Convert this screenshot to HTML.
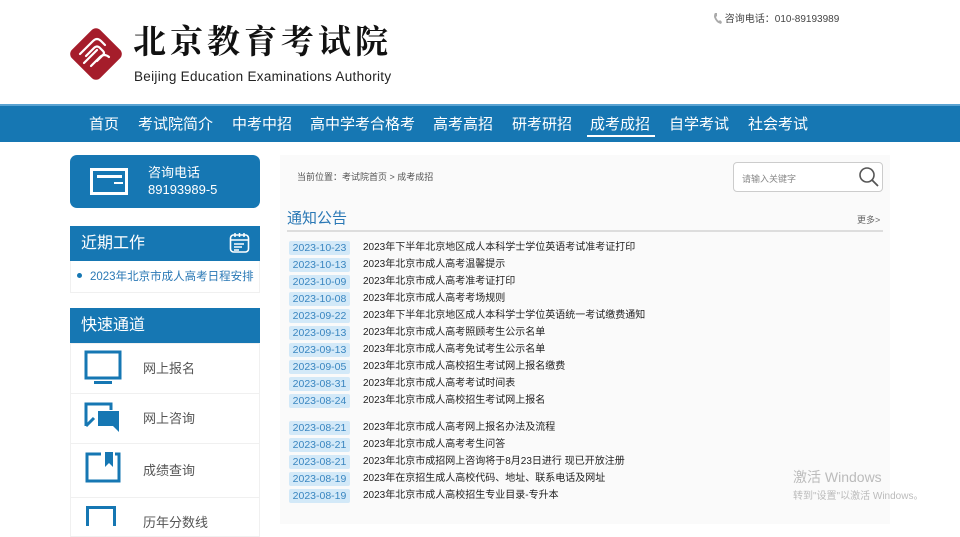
<!DOCTYPE html>
<html><head><meta charset="utf-8"><style>
*{margin:0;padding:0;box-sizing:border-box}
body{width:960px;height:524px;overflow:hidden;background:#fff;font-family:"Liberation Sans","Microsoft YaHei","Noto Sans CJK SC",sans-serif;position:relative}
.abs{position:absolute}
.nav{left:0;top:104px;width:960px;height:38px;background:#1677b3;border-top:2px solid #5aa3d2}
.nav span{position:absolute;top:7px;color:#fff;font-size:15px;white-space:nowrap}
.panel{left:280px;top:155px;width:610px;height:369px;background:#fafafa}
.row{position:absolute;left:289px;height:14px;font-size:10px;white-space:nowrap}
.row b{display:inline-block;width:61px;height:14px;background:#d3e9f8;color:#3a86c0;font-weight:normal;font-size:10.5px;line-height:14px;text-align:center;border-radius:2px;vertical-align:top}
.row i{font-style:normal;color:#222;margin-left:13px;line-height:14px;vertical-align:top}
.hd{left:70px;width:190px;height:35px;background:#1677b3;color:#fff;font-size:16px;line-height:35px;padding-left:11px}
.qi{left:70px;width:190px;border:1px solid #f0f0f0;background:#fff;font-size:13px;color:#555}
.qi span{position:absolute;left:72px}
</style></head><body>
<svg class="abs" style="left:66px;top:24px" width="60" height="60" viewBox="0 0 60 60">
<rect x="10" y="10" width="40" height="40" rx="6" fill="#a51d2b" transform="rotate(45 30 30)"/>
<g fill="none" stroke="#fff" stroke-width="2.2" stroke-linecap="round">
<path d="M14 30 L27 17 Q31 13 35 17 L39 21"/>
<path d="M20 32 L28 24 Q31 21 34 24 L37 27 Q39 29 37 31 L31 37"/>
<path d="M18 39 L31 26"/>
<path d="M25 42 L34 33 Q38 29 43 33"/>
</g></svg>
<div class="abs" style="left:133px;top:18px;font-family:'Noto Serif CJK SC',serif;font-size:33px;letter-spacing:4px;color:#111;font-weight:bold;line-height:44px">北京教育考试院</div>
<div class="abs" style="left:134px;top:69px;font-size:13.5px;color:#222;letter-spacing:0.3px">Beijing Education Examinations Authority</div>
<div class="abs" style="left:713px;top:10px;font-size:10px;color:#444">
<svg width="9" height="12" viewBox="0 0 9 12" style="vertical-align:-2px"><path d="M2 1 L4 1 L4 4 L3 5 Q4 8 6 9 L7 8 L9 10 L8 12 Q3 11 1 5 Q1 2 2 1Z" fill="#aaa"/></svg> 咨询电话：010-89193989</div>
<div class="abs nav">
<span style="left:89px">首页</span><span style="left:138px">考试院简介</span><span style="left:232px">中考中招</span><span style="left:310px">高中学考合格考</span><span style="left:433px">高考高招</span><span style="left:512px">研考研招</span><span style="left:590px">成考成招</span><span style="left:669px">自学考试</span><span style="left:748px">社会考试</span>
<div class="abs" style="left:587px;top:29px;width:68px;height:2px;background:#fff"></div>
</div>
<div class="abs" style="left:70px;top:155px;width:190px;height:53px;background:#1677b3;border-radius:7px"></div>
<div class="abs" style="left:90px;top:168px;width:38px;height:27px;border:3px solid #fff"></div>
<div class="abs" style="left:97px;top:175px;width:25px;height:3px;background:#fff"></div>
<div class="abs" style="left:114px;top:182px;width:9px;height:2px;background:#fff"></div>
<div class="abs" style="left:148px;top:164px;color:#fff;font-size:13px;line-height:17px">咨询电话<br>89193989-5</div>
<div class="abs hd" style="top:226px">近期工作</div>
<svg class="abs" style="left:229px;top:232px" width="21" height="22" viewBox="0 0 21 22"><rect x="1.5" y="3" width="18" height="17" rx="3" fill="none" stroke="#fff" stroke-width="1.6"/><path d="M1.5 8H19.5M6 1V5M10.5 1V5M15 1V5M5 12H15M5 15H13M5 18H10" stroke="#fff" stroke-width="1.5"/></svg>
<div class="abs" style="left:70px;top:261px;width:190px;height:32px;border:1px solid #f0f0f0;border-top:0"></div>
<div class="abs" style="left:77px;top:273px;width:5px;height:5px;border-radius:50%;background:#1677b3"></div>
<div class="abs" style="left:90px;top:268px;font-size:11.5px;color:#2a78b5">2023年北京市成人高考日程安排</div>
<div class="abs hd" style="top:308px">快速通道</div>
<div class="abs qi" style="top:343px;height:51px"><span style="top:14px">网上报名</span></div>
<div class="abs qi" style="top:393px;height:51px"><span style="top:14px">网上咨询</span></div>
<div class="abs qi" style="top:443px;height:55px"><span style="top:16px">成绩查询</span></div>
<div class="abs qi" style="top:497px;height:40px"><span style="top:14px">历年分数线</span></div>
<svg class="abs" style="left:84px;top:350px" width="40" height="140" viewBox="0 0 40 140">
<rect x="2" y="2" width="34" height="26" fill="none" stroke="#1677b3" stroke-width="3"/><rect x="10" y="31" width="18" height="3" fill="#1677b3"/>
<path d="M2 76 V54 H27 V60" fill="none" stroke="#1677b3" stroke-width="3"/><path d="M2 76 L10 68" stroke="#1677b3" stroke-width="3"/><path d="M14 61 H35 V82 L29 76 H14Z" fill="#1677b3"/>
<path d="M17 104 H3 V131 H35 V104 H31" fill="none" stroke="#1677b3" stroke-width="3"/><path d="M21 102 H29 V117 L25 113 L21 117Z" fill="#1677b3"/>
</svg>
<div class="abs" style="left:86px;top:506px;width:30px;height:20px;border:3px solid #1677b3;border-bottom:0"></div>
<div class="abs panel"></div>
<div class="abs" style="left:297px;top:170px;font-size:9px;color:#555">当前位置：考试院首页 &gt; 成考成招</div>
<div class="abs" style="left:733px;top:162px;width:150px;height:30px;border:1px solid #ccc;border-radius:4px;background:#fff"></div>
<div class="abs" style="left:742px;top:172px;font-size:9px;color:#888">请输入关键字</div>
<svg class="abs" style="left:858px;top:166px" width="22" height="22" viewBox="0 0 22 22"><circle cx="9" cy="9" r="7" fill="none" stroke="#555" stroke-width="1.6"/><path d="M14 14 L20 20" stroke="#555" stroke-width="1.8"/></svg>
<div class="abs" style="left:287px;top:207px;font-size:15px;color:#2a78b5">通知公告</div>
<div class="abs" style="left:857px;top:213px;font-size:9px;color:#666">更多&gt;</div>
<div class="abs" style="left:287px;top:230px;width:596px;height:2px;background:#ddd"></div>
<div class="row" style="top:241px"><b>2023-10-23</b><i>2023年下半年北京地区成人本科学士学位英语考试准考证打印</i></div>
<div class="row" style="top:258px"><b>2023-10-13</b><i>2023年北京市成人高考温馨提示</i></div>
<div class="row" style="top:275px"><b>2023-10-09</b><i>2023年北京市成人高考准考证打印</i></div>
<div class="row" style="top:292px"><b>2023-10-08</b><i>2023年北京市成人高考考场规则</i></div>
<div class="row" style="top:309px"><b>2023-09-22</b><i>2023年下半年北京地区成人本科学士学位英语统一考试缴费通知</i></div>
<div class="row" style="top:326px"><b>2023-09-13</b><i>2023年北京市成人高考照顾考生公示名单</i></div>
<div class="row" style="top:343px"><b>2023-09-13</b><i>2023年北京市成人高考免试考生公示名单</i></div>
<div class="row" style="top:360px"><b>2023-09-05</b><i>2023年北京市成人高校招生考试网上报名缴费</i></div>
<div class="row" style="top:377px"><b>2023-08-31</b><i>2023年北京市成人高考考试时间表</i></div>
<div class="row" style="top:394px"><b>2023-08-24</b><i>2023年北京市成人高校招生考试网上报名</i></div>
<div class="row" style="top:421px"><b>2023-08-21</b><i>2023年北京市成人高考网上报名办法及流程</i></div>
<div class="row" style="top:438px"><b>2023-08-21</b><i>2023年北京市成人高考考生问答</i></div>
<div class="row" style="top:455px"><b>2023-08-21</b><i>2023年北京市成招网上咨询将于8月23日进行 现已开放注册</i></div>
<div class="row" style="top:472px"><b>2023-08-19</b><i>2023年在京招生成人高校代码、地址、联系电话及网址</i></div>
<div class="row" style="top:489px"><b>2023-08-19</b><i>2023年北京市成人高校招生专业目录-专升本</i></div>
<div class="abs" style="left:793px;top:467px;font-size:14px;color:#bbb">激活 Windows</div>
<div class="abs" style="left:793px;top:487px;font-size:10px;color:#bbb">转到"设置"以激活 Windows。</div>
</body></html>
